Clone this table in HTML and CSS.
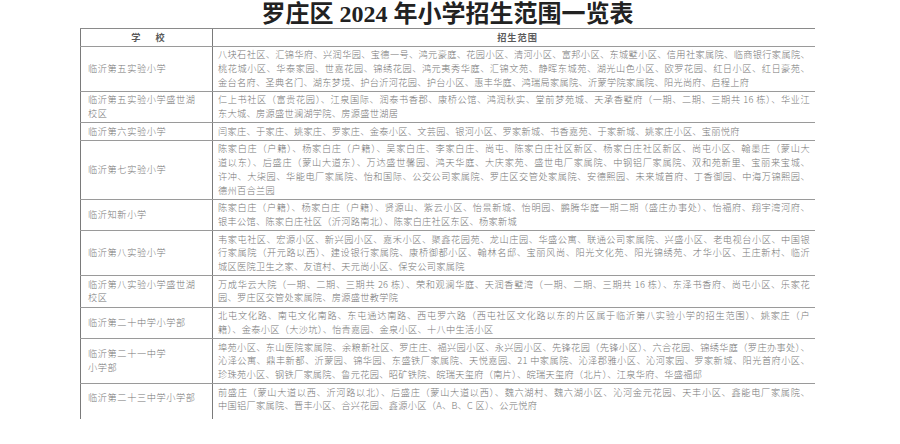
FILE: index.html
```html
<!DOCTYPE html>
<html lang="zh-CN">
<head>
<meta charset="utf-8">
<title>罗庄区 2024 年小学招生范围一览表</title>
<link rel="stylesheet" href="styles.css">
</head>
<body>
<div class="sheet">
  <h1 class="title">罗庄区 2024 年小学招生范围一览表</h1>
  <div class="table">
    <div class="row head">
      <div class="name">学　校</div>
      <div class="area">招生范围</div>
    </div>
    <div class="row">
      <div class="name">临沂第五实验小学</div>
      <div class="area">
        <span class="ln j">八块石社区、汇锦华府、兴润华园、宝德一号、鸿元豪庭、花园小区、清河小区、富邦小区、东城墅小区、信用社家属院、临商银行家属院、</span>
        <span class="ln j">桃花城小区、华泰家园、世嘉花园、锦绣花园、鸿元夷秀华庭、汇锦文苑、静晖东城苑、湖光山色小区、欧罗花园、红日小区、红日豪苑、</span>
        <span class="ln">金台名府、圣典名门、湖东梦境、护台沂河花园、护台小区、惠丰华庭、鸿瑞局家属院、沂蒙学院家属院、阳光尚府、启程上府</span>
      </div>
    </div>
    <div class="row">
      <div class="name">临沂第五实验小学盛世湖<br>校区</div>
      <div class="area">
        <span class="ln j">仁上书社区（富贵花园）、江泉国际、润泰书香郡、康桥公馆、鸿润秋实、堂前梦苑城、天承香墅府（一期、二期、三期共 16 栋）、华业江</span>
        <span class="ln">东大城、房源盛世澜湖学院、房源盛世湖居</span>
      </div>
    </div>
    <div class="row">
      <div class="name">临沂第六实验小学</div>
      <div class="area">
        <span class="ln">闫家庄、于家庄、姚家庄、罗家庄、金泰小区、文芸园、银河小区、罗家新城、书香嘉苑、于家新城、姚家庄小区、宝丽悦府</span>
      </div>
    </div>
    <div class="row">
      <div class="name">临沂第七实验小学</div>
      <div class="area">
        <span class="ln j">陈家白庄（户籍）、杨家白庄（户籍）、吴家白庄、李家白庄、尚屯、陈家白庄社区新区、杨家白庄社区新区、尚屯小区、翰墨庄（蒙山大</span>
        <span class="ln j">道以东）、后盛庄（蒙山大道东）、万达盛世馨园、鸿天华庭、大庆家苑、盛世电厂家属院、中钢铝厂家属院、双和苑新里、宝丽来宝城、</span>
        <span class="ln j">许冲、大柒园、华能电厂家属院、怡和国际、公交公司家属院、罗庄区交管处家属院、安德熙园、未来城首府、丁香御园、中海万锦熙园、</span>
        <span class="ln">德州百合兰园</span>
      </div>
    </div>
    <div class="row">
      <div class="name">临沂知新小学</div>
      <div class="area">
        <span class="ln j">陈家白庄（户籍）、杨家白庄（户籍）、贤源山、紫云小区、怡景新城、怡明园、鹏腾华庭一期二期（盛庄办事处）、怡福府、翔宇湾河府、</span>
        <span class="ln">银丰公馆、陈家白庄社区（沂河路南北）、陈家白庄社区东区、杨家新城</span>
      </div>
    </div>
    <div class="row">
      <div class="name">临沂第八实验小学</div>
      <div class="area">
        <span class="ln j">韦家屯社区、宏源小区、新兴园小区、嘉禾小区、聚鑫花园苑、龙山庄园、华盛公寓、联通公司家属院、兴盛小区、老电视台小区、中国银</span>
        <span class="ln j">行家属院（开元路以西）、建设银行家属院、康桥御都小区、翰林名邸、宝丽风尚、阳光文化苑、阳光锦绣苑、才华小区、王庄新村、临沂</span>
        <span class="ln">城区医院卫生之家、友谊村、天元尚小区、保安公司家属院</span>
      </div>
    </div>
    <div class="row">
      <div class="name">临沂第八实验小学盛世湖<br>校区</div>
      <div class="area">
        <span class="ln j">万成华云大院（一期、二期、三期共 26 栋）、荣和观澜华庭、天润香墅湾（一期、二期、三期共 16 栋）、东泽书香府、尚屯小区、乐家花</span>
        <span class="ln">园、罗庄区交管处家属院、房源盛世教学院</span>
      </div>
    </div>
    <div class="row">
      <div class="name">临沂第二十中学小学部</div>
      <div class="area">
        <span class="ln j">北屯文化路、南屯文化南路、东屯通达南路、西屯罗六路（西屯社区文化路以东的片区属于临沂第八实验小学的招生范围）、姚家庄（户</span>
        <span class="ln">籍）、金泰小区（大沙坑）、怡青嘉园、金泉小区、十八中生活小区</span>
      </div>
    </div>
    <div class="row">
      <div class="name">临沂第二十一中学<br>小学部</div>
      <div class="area">
        <span class="ln j">埠苑小区、东山医院家属院、余粮新社区、罗庄庄、福兴园小区、永兴园小区、先锋花园（先锋小区）、六合花园、锦绣华庭（罗庄办事处）、</span>
        <span class="ln j">沁泽公寓、鼎丰新都、沂蒙园、锦华园、东盛铁厂家属院、天悦嘉园、21 中家属院、沁泽郡雅小区、沁河家园、罗家新城、阳光首府小区、</span>
        <span class="ln">珍珠苑小区、钢铁厂家属院、鲁元花园、昭矿铁院、皖瑞天玺府（南片）、皖瑞天玺府（北片）、江泉华府、华盛福邸</span>
      </div>
    </div>
    <div class="row last">
      <div class="name">临沂第二十三中学小学部</div>
      <div class="area">
        <span class="ln j">前盛庄（蒙山大道以西、沂河路以北）、后盛庄（蒙山大道以西）、魏六湖村、魏六湖小区、沁河金元花园、天丰小区、鑫能电厂家属院、</span>
        <span class="ln">中国铝厂家属院、晋丰小区、合兴花园、鑫源小区（A、B、C 区）、公元悦府</span>
      </div>
    </div>
  </div>
</div>
</body>
</html>
```
FILE: styles.css
```css
html, body {
  margin: 0;
  padding: 0;
  background: #ffffff;
}

.sheet {
  width: 735px;
  margin-left: 80px;
}

.title {
  margin: 0;
  height: 28px;
  line-height: 28px;
  font-size: 24px;
  font-weight: 700;
  text-align: center;
  color: #222222;
  font-family: "Liberation Serif", "Noto Sans CJK SC", serif;
  border-bottom: 1px solid #8a8a8a;
}

.table {
  font-family: "Noto Sans CJK SC", "Noto Sans", sans-serif;
  font-weight: 300;
  color: #777777;
}

.row {
  display: grid;
  grid-template-columns: 133px 602px;
  border-bottom: 1px solid #9a9a9a;
}

.row.last {
  border-bottom: none;
  min-height: 35px;
}

.name {
  border-left: 1px solid #7a7a7a;
  border-right: 1px solid #7a7a7a;
  padding: 1.5px 4px 1.5px 7px;
  display: flex;
  align-items: center;
  font-size: 9.2px;
  line-height: 13.7px;
  letter-spacing: 0.6px;
}

.area {
  padding: 1.5px 5px 1.5px 5px;
  font-size: 9.2px;
  line-height: 13.7px;
  letter-spacing: 0.3px;
}

.ln {
  display: block;
  white-space: nowrap;
  text-align: left;
}

.ln.j {
  text-align: justify;
  text-align-last: justify;
}

.row.last .name {
  align-items: flex-start;
  padding-top: 7px;
}

.head .name,
.head .area {
  justify-content: center;
  text-align: center;
  font-weight: 700;
  color: #5a5a5a;
}

.head .name {
  letter-spacing: 3px;
  padding-left: 10px;
}

.head .area {
  letter-spacing: 1px;
  padding-left: 12px;
}
```
